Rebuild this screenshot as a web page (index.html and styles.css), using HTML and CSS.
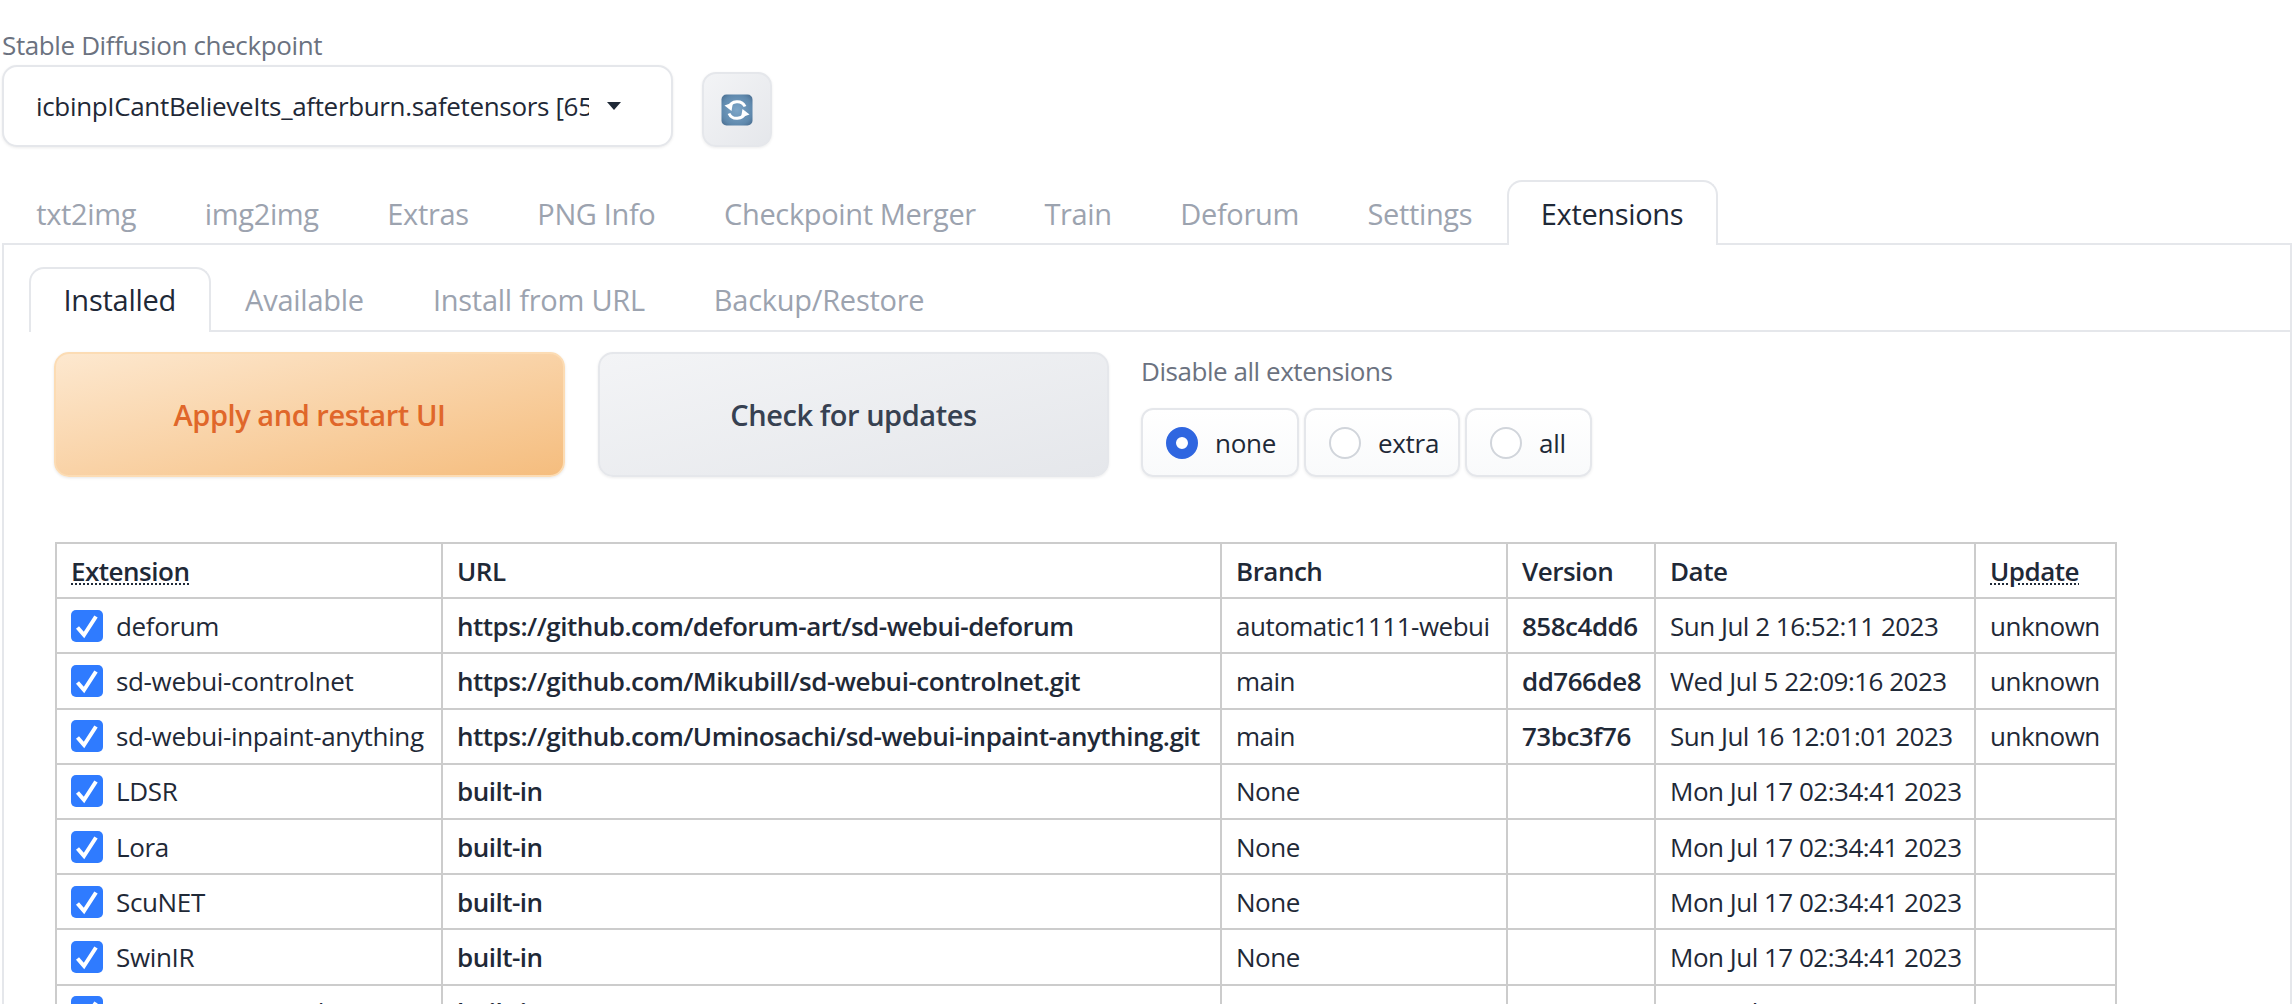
FILE: index.html
```html
<!DOCTYPE html>
<html lang="en">
<head>
<meta charset="utf-8">
<title>Extensions</title>
<link rel="stylesheet" href="styles.css">
</head>
<body>
<div class="model-row">
  <div class="model-field">
    <div class="field-label">Stable Diffusion checkpoint</div>
    <div class="select">
      <span class="select-value">icbinpICantBelieveIts_afterburn.safetensors [65</span>
      <span class="caret"></span>
    </div>
  </div>
  <button class="refresh" type="button" aria-label="Refresh">
    <svg width="32" height="32" viewBox="0 0 32 32">
      <defs>
        <radialGradient id="tile" cx="0.5" cy="0.5" r="0.7">
          <stop offset="0" stop-color="#7ea6c8"/>
          <stop offset="0.7" stop-color="#5f89ad"/>
          <stop offset="1" stop-color="#46698c"/>
        </radialGradient>
      </defs>
      <rect x="0.5" y="0.5" width="31" height="31" rx="5" fill="url(#tile)"/>
      <path d="M8 13.5 A8.5 8 0 0 1 24 12.5" fill="none" stroke="#fff" stroke-width="3"/>
      <path d="M3.5 11.5 L12 8.5 L10.5 17 Z" fill="#fff"/>
      <path d="M24 18.5 A8.5 8 0 0 1 8 19.5" fill="none" stroke="#fff" stroke-width="3"/>
      <path d="M28.5 20.5 L20 23.5 L21.5 15 Z" fill="#fff"/>
    </svg>
  </button>
</div>

<nav class="tabs top-tabs">
  <span class="tab">txt2img</span>
  <span class="tab">img2img</span>
  <span class="tab">Extras</span>
  <span class="tab">PNG Info</span>
  <span class="tab">Checkpoint Merger</span>
  <span class="tab">Train</span>
  <span class="tab">Deforum</span>
  <span class="tab">Settings</span>
  <span class="tab active">Extensions</span>
</nav>

<section class="panel">
  <nav class="tabs sub-tabs">
    <span class="tab active">Installed</span>
    <span class="tab">Available</span>
    <span class="tab">Install from URL</span>
    <span class="tab">Backup/Restore</span>
  </nav>
  <div class="actions">
    <button class="big-btn primary" type="button">Apply and restart UI</button>
    <button class="big-btn secondary" type="button">Check for updates</button>
    <div class="disable-group">
      <div class="field-label">Disable all extensions</div>
      <div class="radios">
        <label class="radio radio-none"><span class="dot on"></span>none</label>
        <label class="radio radio-extra"><span class="dot"></span>extra</label>
        <label class="radio radio-all"><span class="dot"></span>all</label>
      </div>
    </div>
  </div>

  <table class="ext-table">
    <colgroup>
      <col class="c1"><col class="c2"><col class="c3"><col class="c4"><col class="c5"><col class="c6">
    </colgroup>
    <thead>
      <tr><th><abbr>Extension</abbr></th><th>URL</th><th>Branch</th><th>Version</th><th>Date</th><th><abbr>Update</abbr></th></tr>
    </thead>
    <tbody>
      <tr><td><span class="ext"><span class="check"><svg viewBox="0 0 32 32" width="32" height="32"><path d="M6.5 17.5 L13 25 L25 6.5" fill="none" stroke="#fff" stroke-width="4"/></svg></span>deforum</span></td><td class="b">https://github.com/deforum-art/sd-webui-deforum</td><td>automatic1111-webui</td><td class="b">858c4dd6</td><td>Sun Jul 2 16:52:11 2023</td><td>unknown</td></tr>
      <tr><td><span class="ext"><span class="check"><svg viewBox="0 0 32 32" width="32" height="32"><path d="M6.5 17.5 L13 25 L25 6.5" fill="none" stroke="#fff" stroke-width="4"/></svg></span>sd-webui-controlnet</span></td><td class="b">https://github.com/Mikubill/sd-webui-controlnet.git</td><td>main</td><td class="b">dd766de8</td><td>Wed Jul 5 22:09:16 2023</td><td>unknown</td></tr>
      <tr><td><span class="ext"><span class="check"><svg viewBox="0 0 32 32" width="32" height="32"><path d="M6.5 17.5 L13 25 L25 6.5" fill="none" stroke="#fff" stroke-width="4"/></svg></span>sd-webui-inpaint-anything</span></td><td class="b">https://github.com/Uminosachi/sd-webui-inpaint-anything.git</td><td>main</td><td class="b">73bc3f76</td><td>Sun Jul 16 12:01:01 2023</td><td>unknown</td></tr>
      <tr><td><span class="ext"><span class="check"><svg viewBox="0 0 32 32" width="32" height="32"><path d="M6.5 17.5 L13 25 L25 6.5" fill="none" stroke="#fff" stroke-width="4"/></svg></span>LDSR</span></td><td class="b">built-in</td><td>None</td><td></td><td>Mon Jul 17 02:34:41 2023</td><td></td></tr>
      <tr><td><span class="ext"><span class="check"><svg viewBox="0 0 32 32" width="32" height="32"><path d="M6.5 17.5 L13 25 L25 6.5" fill="none" stroke="#fff" stroke-width="4"/></svg></span>Lora</span></td><td class="b">built-in</td><td>None</td><td></td><td>Mon Jul 17 02:34:41 2023</td><td></td></tr>
      <tr><td><span class="ext"><span class="check"><svg viewBox="0 0 32 32" width="32" height="32"><path d="M6.5 17.5 L13 25 L25 6.5" fill="none" stroke="#fff" stroke-width="4"/></svg></span>ScuNET</span></td><td class="b">built-in</td><td>None</td><td></td><td>Mon Jul 17 02:34:41 2023</td><td></td></tr>
      <tr><td><span class="ext"><span class="check"><svg viewBox="0 0 32 32" width="32" height="32"><path d="M6.5 17.5 L13 25 L25 6.5" fill="none" stroke="#fff" stroke-width="4"/></svg></span>SwinIR</span></td><td class="b">built-in</td><td>None</td><td></td><td>Mon Jul 17 02:34:41 2023</td><td></td></tr>
      <tr><td><span class="ext"><span class="check"><svg viewBox="0 0 32 32" width="32" height="32"><path d="M6.5 17.5 L13 25 L25 6.5" fill="none" stroke="#fff" stroke-width="4"/></svg></span>canvas-zoom-and-pan</span></td><td class="b">built-in</td><td>None</td><td></td><td>Mon Jul 17 02:34:41 2023</td><td></td></tr>
    </tbody>
  </table>
</section>
</body>
</html>
```
FILE: styles.css
```css
* { box-sizing: border-box; }
html, body { height: 1004px; overflow: hidden; }
body {
  margin: 0;
  background: #fff;
  color: #1f2937;
  font-family: "Open Sans", "Noto Sans", sans-serif;
  font-size: 26px;
  padding: 30px 0 0 2px;
}
.model-row { display: flex; align-items: flex-end; gap: 29px; }
.model-field { width: 671px; }
.field-label { color: #6b7280; font-size: 26px; line-height: 30px; letter-spacing: -0.38px; }
.select {
  height: 82px;
  margin-top: 5px;
  border: 2px solid #e5e7eb;
  border-radius: 15px;
  box-shadow: 0 1px 3px rgba(0,0,0,.08);
  background: #fff;
  display: flex;
  align-items: center;
  padding: 0 50px 0 32px;
  gap: 18px;
}
.select-value { flex: 1; white-space: nowrap; overflow: hidden; line-height: 36px; letter-spacing: -0.34px; }
.caret { width: 0; height: 0; border-left: 7.5px solid transparent; border-right: 7.5px solid transparent; border-top: 8px solid #1f2937; }
.refresh {
  width: 70px; height: 75px; padding: 0;
  border: 2px solid #e5e7eb; border-radius: 14px;
  background: linear-gradient(to bottom right, #f3f4f6, #e5e7eb);
  box-shadow: 0 1px 3px rgba(0,0,0,.08);
  display: flex; align-items: center; justify-content: center;
}
.tabs { display: flex; border-bottom: 2px solid #e5e7eb; font-size: 29px; letter-spacing: -0.35px; }
.tab {
  color: #9ca3af;
  padding: 0 33px;
  margin-bottom: -2px;
  border: 2px solid transparent;
  border-bottom: 0;
  white-space: nowrap;
  border-radius: 15px 15px 0 0;
}
.tab.active { color: #1f2937; border-color: #e5e7eb; background: #fff; }
.top-tabs { margin-top: 33px; height: 65px; }
.top-tabs .tab { height: 65px; line-height: 64px; padding: 0 32.3px; }
.panel { border: 2px solid #e5e7eb; border-top: 0; padding: 22px 0 0 25px; height: 800px; }
.sub-tabs { height: 65px; letter-spacing: -0.25px; }
.sub-tabs .tab { height: 65px; line-height: 62px; padding: 0 32.5px; }
.actions { display: flex; margin-top: 20px; margin-left: 25px; gap: 33px; height: 126px; }
.big-btn {
  height: 125px;
  width: 511px;
  border-radius: 15px;
  font: inherit;
  font-size: 29px;
  font-weight: 600;
  letter-spacing: -0.45px;
}
.big-btn.primary {
  color: #e0672a;
  border: 2px solid #fcdcb4;
  background: linear-gradient(to bottom right, #fde8cf, #f5bd7e);
  box-shadow: 0 1px 3px rgba(0,0,0,.1);
}
.big-btn.secondary {
  width: 511px;
  color: #374151;
  border: 2px solid #e5e7eb;
  background: linear-gradient(to bottom right, #f3f4f6, #e5e7eb);
  box-shadow: 0 1px 3px rgba(0,0,0,.08);
}
.disable-group { margin-left: -1px; }
.disable-group .field-label { margin: 4px 0 0; letter-spacing: -0.45px; }
.radios { display: flex; gap: 5px; margin-top: 22px; }
.radio {
  height: 69px;
  border: 2px solid #e5e7eb;
  border-radius: 12px;
  background: linear-gradient(#fff, #f9fafb);
  box-shadow: 0 1px 3px rgba(0,0,0,.08);
  display: flex; align-items: center;
  padding: 0 0 0 23px;
  gap: 17px;
  font-size: 26px;
  letter-spacing: -0.3px;
}
.radio-none { width: 158px; }
.radio-extra { width: 156px; }
.radio-all { width: 127px; }
.dot { width: 32px; height: 32px; border-radius: 50%; border: 2px solid #d1d5db; background: #fff; }
.dot.on { border: 10px solid #2f66e0; }
.ext-table { margin: 64px 0 0 26px; border-collapse: collapse; table-layout: fixed; width: 2060px; letter-spacing: -0.5px; }
.c1 { width: 386px; } .c2 { width: 779px; } .c3 { width: 286px; } .c4 { width: 148px; } .c5 { width: 320px; } .c6 { width: 141px; }
.ext-table th, .ext-table td {
  border: 2px solid #ccc;
  height: 55.2px;
  padding: 0 15px 0 14px;
  text-align: left;
  white-space: nowrap;
  overflow: hidden;
}
.ext-table td:first-child { letter-spacing: -0.35px; }
.ext-table th, .b { font-weight: 600; }
abbr { text-decoration: underline dotted 2px; text-underline-offset: 3px; }
.ext { display: flex; align-items: center; gap: 13px; }
.check { width: 32px; height: 32px; border-radius: 5px; background: #2f7bff; display: block; flex: none; }
.check svg { display: block; }
```
